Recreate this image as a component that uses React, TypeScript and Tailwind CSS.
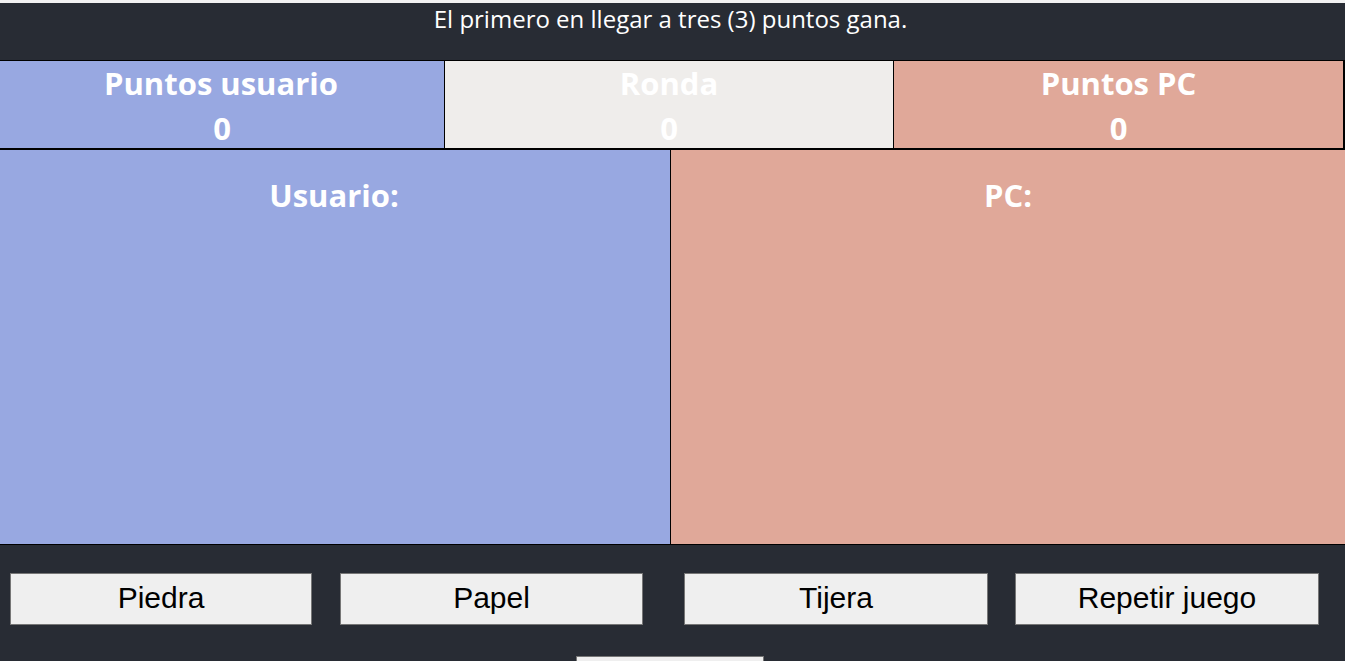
import React from "react";

const sans = { fontFamily: '"Open Sans", "Noto Sans", sans-serif' };

export default function App() {
  return (
    <div className="w-full h-[661px] overflow-hidden bg-[#282c34] flex flex-col" style={sans}>
      <div className="h-[3px] bg-[#f2f2f2] shrink-0" />
      <div className="h-[57px] shrink-0 flex justify-center pl-[-4px] text-white text-[24px] leading-[32px]">
        <span className="-ml-[4px]">El primero en llegar a tres (3) puntos gana.</span>
      </div>
      <div className="h-[90px] shrink-0 flex border-t border-b-2 border-black text-white font-bold text-[31px] leading-[45px]">
        <div className="w-[445px] bg-[#98a8e1] border-r border-black flex flex-col items-center">
          <span className="-ml-[2px]">Puntos usuario</span>
          <span>0</span>
        </div>
        <div className="w-[449px] bg-[#efedeb] border-r border-black flex flex-col items-center">
          <span>Ronda</span>
          <span>0</span>
        </div>
        <div className="flex-1 bg-[#e0a899] border-r-2 border-black flex flex-col items-center">
          <span>Puntos PC</span>
          <span>0</span>
        </div>
      </div>
      <div className="h-[395px] shrink-0 flex border-b border-black text-white font-bold text-[31px] leading-[45px]">
        <div className="w-[671px] bg-[#98a8e1] border-r border-black flex justify-center pt-[23px]">
          <span className="-ml-[2px]">Usuario:</span>
        </div>
        <div className="flex-1 bg-[#e0a899] flex justify-center pt-[23px]">
          <span>PC:</span>
        </div>
      </div>
      <div className="flex pt-[28px] pl-[10px] font-['Liberation_Sans',Arial,sans-serif] text-[30px] leading-[34px] text-black">
        <button className="w-[302px] h-[52px] bg-[#efefef] border border-[#767676] pb-[2px]">Piedra</button>
        <button className="ml-[28px] w-[303px] h-[52px] bg-[#efefef] border border-[#767676] pb-[2px]">Papel</button>
        <button className="ml-[41px] w-[304px] h-[52px] bg-[#efefef] border border-[#767676] pb-[2px]">Tijera</button>
        <button className="ml-[27px] w-[304px] h-[52px] bg-[#efefef] border border-[#767676] pb-[2px]">Repetir juego</button>
      </div>
      <div className="flex justify-center mt-[31px] ml-[-6px]">
        <div className="w-[188px] h-[10px] bg-[#efefef] border border-[#767676]" />
      </div>
    </div>
  );
}
